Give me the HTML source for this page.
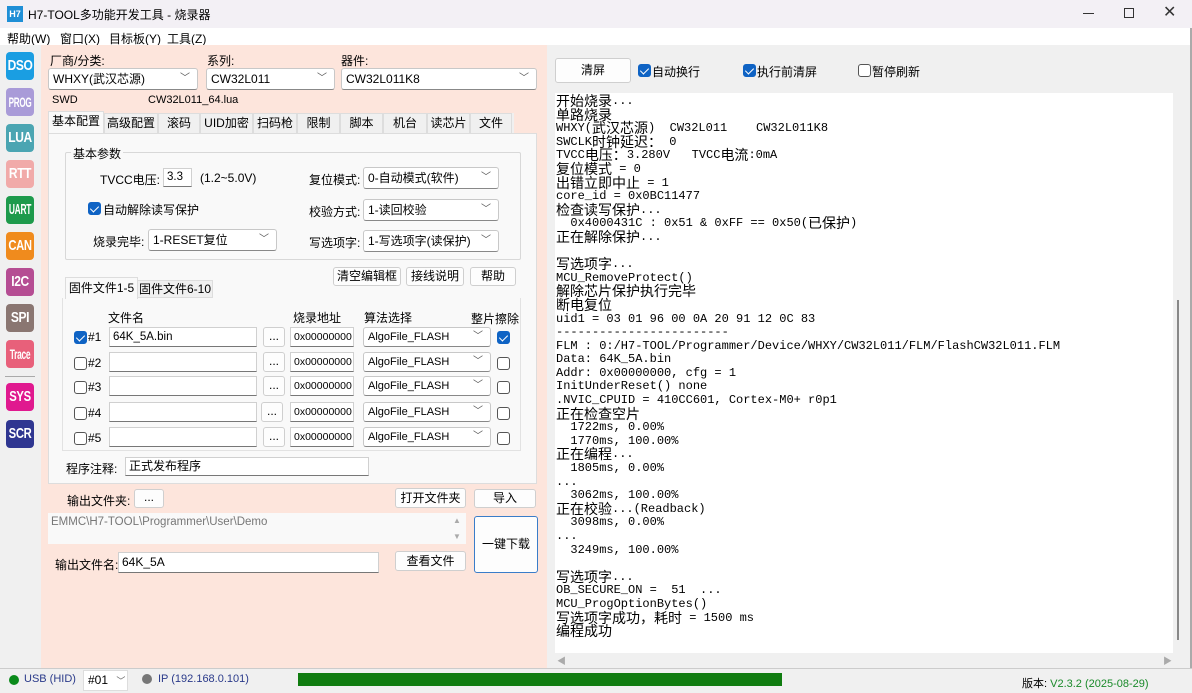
<!DOCTYPE html>
<html><head><meta charset="utf-8"><style>
*{box-sizing:border-box;margin:0;padding:0}
body{width:1192px;height:693px;overflow:hidden;position:relative;background:#f0f0f0;font-family:"Liberation Sans","Noto Sans CJK SC",sans-serif;font-size:12px;color:#000}
.a{position:absolute;white-space:nowrap}
.ic{position:absolute;left:6px;width:28px;height:28px;border-radius:4px;color:#fff;font-weight:bold;font-size:15px;line-height:28px;font-family:"Liberation Sans",sans-serif;overflow:hidden}
.ic span{position:absolute;left:50%;top:0;white-space:nowrap;--s:0.8;transform:translateX(-50%) scaleX(var(--s));letter-spacing:-0.5px}
.cb{position:absolute;background:#fff;border:1px solid #c8c8c8;border-bottom:1px solid #888;border-radius:3px;padding-left:4px;line-height:18px;font-size:12px;white-space:nowrap;overflow:hidden}
.cb .v{position:absolute;right:7px;top:0;color:#555;font-size:10px}
.in{position:absolute;background:#fff;border:1px solid #d0d0d0;border-bottom:1px solid #777;padding-left:3px;font-size:11.5px;white-space:nowrap;overflow:hidden}
.bt{position:absolute;background:#fdfdfd;border:1px solid #cfcfcf;border-radius:3px;text-align:center;font-size:12px;white-space:nowrap}
.ck{position:absolute;width:13px;height:13px;border:1px solid #555;border-radius:3px;background:#fff}
.ck.on{background:#0f63c4;border-color:#0f63c4}
.ck.on:after{content:"";position:absolute;left:3px;top:1px;width:4px;height:7px;border:solid #fff;border-width:0 1.5px 1.5px 0;transform:rotate(45deg)}
.tab{position:absolute;top:113px;height:20px;background:#f0f0f0;border:1px solid #ddd;border-bottom:none;text-align:center;line-height:19px;font-size:12px}
pre{font-family:"Liberation Mono","Noto Sans CJK SC",monospace;font-size:12px;line-height:13.6px;white-space:pre}
pre b{font-weight:normal;font-size:14px;line-height:10px;position:relative;top:2px}
</style></head><body>
<!-- title bar -->
<div class="a" style="left:0;top:0;width:1192px;height:28px;background:#f3f0f5"></div>
<div class="a" style="left:7px;top:6px;width:16px;height:16px;background:#1f8fd6;color:#fff;font-size:9px;font-weight:bold;text-align:center;line-height:16px">H7</div>
<div class="a" style="left:28px;top:6px;font-size:12px">H7-TOOL多功能开发工具 - 烧录器</div>
<div class="a" style="left:1083px;top:13px;width:11px;height:1px;background:#333"></div>
<div class="a" style="left:1124px;top:8px;width:10px;height:10px;border:1px solid #333"></div>
<div class="a" style="left:1163px;top:2px;font-size:16px;color:#333">✕</div>
<!-- menu -->
<div class="a" style="left:0;top:28px;width:1192px;height:17px;background:#fff"></div>
<div class="a" style="left:7px;top:30px;font-size:12px">帮助(W)</div>
<div class="a" style="left:60px;top:30px;font-size:12px">窗口(X)</div>
<div class="a" style="left:109px;top:30px;font-size:12px">目标板(Y)</div>
<div class="a" style="left:167px;top:30px;font-size:12px">工具(Z)</div>
<!-- sidebar -->
<div class="a" style="left:0;top:45px;width:41px;height:623px;background:#f0f0f0"></div>
<div class="ic" style="top:52px;background:#1a9ee2"><span>DSO</span></div>
<div class="ic" style="top:88px;background:#a99bd8;font-size:14px"><span style="--s:0.58">PROG</span></div>
<div class="ic" style="top:124px;background:#4ba5b2"><span>LUA</span></div>
<div class="ic" style="top:160px;background:#f1aaa9"><span>RTT</span></div>
<div class="ic" style="top:196px;background:#1d9a4c;font-size:15px"><span style="--s:0.56">UART</span></div>
<div class="ic" style="top:232px;background:#f08b1d"><span style="--s:0.75">CAN</span></div>
<div class="ic" style="top:268px;background:#b54d93"><span>I2C</span></div>
<div class="ic" style="top:304px;background:#8a7671"><span>SPI</span></div>
<div class="ic" style="top:340px;background:#e8607a;font-size:14px"><span style="--s:0.6">Trace</span></div>
<div class="a" style="left:5px;top:376px;width:30px;height:1px;background:#aaa"></div>
<div class="ic" style="top:383px;background:#e0198f"><span style="--s:0.75">SYS</span></div>
<div class="ic" style="top:420px;background:#2f3691"><span style="--s:0.75">SCR</span></div>
<!-- left panel -->
<div class="a" style="left:41px;top:45px;width:506px;height:623px;background:#fde5dc"></div>
<div class="a" style="left:50px;top:52px">厂商/分类:</div>
<div class="a" style="left:207px;top:52px">系列:</div>
<div class="a" style="left:341px;top:52px">器件:</div>
<div class="cb" style="left:48px;top:68px;width:150px;height:22px;line-height:20px">WHXY(武汉芯源)<span class="v">﹀</span></div>
<div class="cb" style="left:206px;top:68px;width:129px;height:22px;line-height:20px">CW32L011<span class="v">﹀</span></div>
<div class="cb" style="left:341px;top:68px;width:196px;height:22px;line-height:20px">CW32L011K8<span class="v">﹀</span></div>
<div class="a" style="left:52px;top:94px;font-size:11px">SWD</div>
<div class="a" style="left:148px;top:94px;font-size:11px">CW32L011_64.lua</div>
<!-- tabs -->
<div class="a" style="left:48px;top:113px;width:466px;height:20px;background:#f0f0f0"></div>
<div class="tab" style="left:48px;width:56px;background:#f9f9f9;top:111px;height:22px">基本配置</div>
<div class="tab" style="left:104px;width:54px">高级配置</div>
<div class="tab" style="left:158px;width:42px">滚码</div>
<div class="tab" style="left:200px;width:53px">UID加密</div>
<div class="tab" style="left:253px;width:44px">扫码枪</div>
<div class="tab" style="left:297px;width:43px">限制</div>
<div class="tab" style="left:340px;width:43px">脚本</div>
<div class="tab" style="left:383px;width:44px">机台</div>
<div class="tab" style="left:427px;width:43px">读芯片</div>
<div class="tab" style="left:470px;width:42px">文件</div>
<div class="a" style="left:48px;top:133px;width:489px;height:351px;background:#f9f9f9;border:1px solid #ddd"></div>
<!-- group -->
<div class="a" style="left:65px;top:152px;width:456px;height:108px;border:1px solid #d8d8d8;border-radius:2px"></div>
<div class="a" style="left:71px;top:145px;background:#f9f9f9;padding:0 2px">基本参数</div>
<div class="a" style="left:100px;top:171px">TVCC电压:</div>
<div class="in" style="left:163px;top:168px;width:29px;height:19px;line-height:17px">3.3</div>
<div class="a" style="left:200px;top:171px">(1.2~5.0V)</div>
<div class="a" style="left:309px;top:171px">复位模式:</div>
<div class="cb" style="left:363px;top:167px;width:136px;height:22px;line-height:20px">0-自动模式(软件)<span class="v">﹀</span></div>
<div class="ck on" style="left:88px;top:202px"></div>
<div class="a" style="left:103px;top:201px">自动解除读写保护</div>
<div class="a" style="left:309px;top:203px">校验方式:</div>
<div class="cb" style="left:363px;top:199px;width:136px;height:22px;line-height:20px">1-读回校验<span class="v">﹀</span></div>
<div class="a" style="left:93px;top:233px">烧录完毕:</div>
<div class="cb" style="left:148px;top:229px;width:129px;height:22px;line-height:20px">1-RESET复位<span class="v">﹀</span></div>
<div class="a" style="left:309px;top:234px">写选项字:</div>
<div class="cb" style="left:363px;top:230px;width:136px;height:22px;line-height:20px">1-写选项字(读保护)<span class="v">﹀</span></div>
<div class="bt" style="left:333px;top:267px;width:68px;height:19px;line-height:17px">清空编辑框</div>
<div class="bt" style="left:406px;top:267px;width:58px;height:19px;line-height:17px">接线说明</div>
<div class="bt" style="left:470px;top:267px;width:46px;height:19px;line-height:17px">帮助</div>
<!-- sub tabs -->
<div class="a" style="left:137px;top:280px;width:76px;height:18px;background:#f0f0f0;border:1px solid #ddd;text-align:center;line-height:17px">固件文件6-10</div>
<div class="a" style="left:65px;top:277px;width:73px;height:22px;background:#f9f9f9;border:1px solid #ddd;border-bottom:none;text-align:center;line-height:20px">固件文件1-5</div>
<div class="a" style="left:62px;top:298px;width:459px;height:153px;border:1px solid #e2e2e2;border-top:none"></div>
<div class="a" style="left:108px;top:309px">文件名</div>
<div class="a" style="left:293px;top:309px">烧录地址</div>
<div class="a" style="left:364px;top:309px">算法选择</div>
<div class="a" style="left:471px;top:310px">整片擦除</div>
<!-- rows -->
<div class="ck on" style="left:74px;top:331px"></div><div class="a" style="left:88px;top:330px">#1</div>
<div class="in" style="left:109px;top:327px;width:148px;height:20px;line-height:18px">64K_5A.bin</div>
<div class="bt" style="left:263px;top:327px;width:22px;height:20px;line-height:16px">...</div>
<div class="in" style="left:290px;top:327px;width:64px;height:20px;line-height:18px;font-size:10.5px">0x00000000</div>
<div class="cb" style="left:363px;top:327px;width:128px;height:20px;font-size:11px">AlgoFile_FLASH<span class="v">﹀</span></div>
<div class="ck on" style="left:497px;top:331px"></div>

<div class="ck" style="left:74px;top:357px"></div><div class="a" style="left:88px;top:356px">#2</div>
<div class="in" style="left:109px;top:352px;width:148px;height:20px"></div>
<div class="bt" style="left:263px;top:352px;width:22px;height:20px;line-height:16px">...</div>
<div class="in" style="left:290px;top:352px;width:64px;height:20px;line-height:18px;font-size:10.5px">0x00000000</div>
<div class="cb" style="left:363px;top:352px;width:128px;height:20px;font-size:11px">AlgoFile_FLASH<span class="v">﹀</span></div>
<div class="ck" style="left:497px;top:357px"></div>

<div class="ck" style="left:74px;top:381px"></div><div class="a" style="left:88px;top:380px">#3</div>
<div class="in" style="left:109px;top:376px;width:148px;height:20px"></div>
<div class="bt" style="left:263px;top:376px;width:22px;height:20px;line-height:16px">...</div>
<div class="in" style="left:290px;top:376px;width:64px;height:20px;line-height:18px;font-size:10.5px">0x00000000</div>
<div class="cb" style="left:363px;top:376px;width:128px;height:20px;font-size:11px">AlgoFile_FLASH<span class="v">﹀</span></div>
<div class="ck" style="left:497px;top:381px"></div>

<div class="ck" style="left:74px;top:407px"></div><div class="a" style="left:88px;top:406px">#4</div>
<div class="in" style="left:109px;top:402px;width:148px;height:20px"></div>
<div class="bt" style="left:261px;top:402px;width:22px;height:20px;line-height:16px">...</div>
<div class="in" style="left:290px;top:402px;width:64px;height:20px;line-height:18px;font-size:10.5px">0x00000000</div>
<div class="cb" style="left:363px;top:402px;width:128px;height:20px;font-size:11px">AlgoFile_FLASH<span class="v">﹀</span></div>
<div class="ck" style="left:497px;top:407px"></div>

<div class="ck" style="left:74px;top:432px"></div><div class="a" style="left:88px;top:431px">#5</div>
<div class="in" style="left:109px;top:427px;width:148px;height:20px"></div>
<div class="bt" style="left:263px;top:427px;width:22px;height:20px;line-height:16px">...</div>
<div class="in" style="left:290px;top:427px;width:64px;height:20px;line-height:18px;font-size:10.5px">0x00000000</div>
<div class="cb" style="left:363px;top:427px;width:128px;height:20px;font-size:11px">AlgoFile_FLASH<span class="v">﹀</span></div>
<div class="ck" style="left:497px;top:432px"></div>

<div class="a" style="left:66px;top:460px">程序注释:</div>
<div class="in" style="left:125px;top:457px;width:244px;height:19px;line-height:17px;font-size:12px">正式发布程序</div>
<!-- bottom -->
<div class="a" style="left:67px;top:492px">输出文件夹:</div>
<div class="bt" style="left:134px;top:489px;width:30px;height:19px;line-height:15px">...</div>
<div class="bt" style="left:395px;top:488px;width:71px;height:20px;line-height:18px">打开文件夹</div>
<div class="bt" style="left:474px;top:489px;width:62px;height:19px;line-height:17px">导入</div>
<div class="a" style="left:48px;top:513px;width:418px;height:31px;background:#f9f9f9"></div>
<div class="a" style="left:51px;top:516px;color:#777;font-size:11.5px">EMMC\H7-TOOL\Programmer\User\Demo</div>
<div class="a" style="left:453px;top:516px;color:#aaa;font-size:8px">▲</div>
<div class="a" style="left:453px;top:532px;color:#aaa;font-size:8px">▼</div>
<div class="bt" style="left:474px;top:516px;width:64px;height:57px;line-height:55px;border:1px solid #3a7dc9">一键下载</div>
<div class="a" style="left:55px;top:556px">输出文件名:</div>
<div class="in" style="left:118px;top:552px;width:261px;height:21px;line-height:19px;font-size:12px">64K_5A</div>
<div class="bt" style="left:395px;top:551px;width:71px;height:20px;line-height:18px">查看文件</div>
<!-- right panel -->
<div class="bt" style="left:555px;top:58px;width:76px;height:25px;line-height:23px">清屏</div>
<div class="ck on" style="left:638px;top:64px"></div><div class="a" style="left:652px;top:63px">自动换行</div>
<div class="ck on" style="left:743px;top:64px"></div><div class="a" style="left:757px;top:63px">执行前清屏</div>
<div class="ck" style="left:858px;top:64px"></div><div class="a" style="left:872px;top:63px">暂停刷新</div>
<div class="a" style="left:555px;top:93px;width:618px;height:560px;background:#fff;overflow:hidden">
<pre style="position:absolute;left:1px;top:2px"><b>开始烧录</b>...
<b>单路烧录</b>
WHXY(<b>武汉芯源</b>)  CW32L011    CW32L011K8
SWCLK<b>时钟延迟：</b> 0
TVCC<b>电压：</b>3.280V   TVCC<b>电流</b>:0mA
<b>复位模式</b> = 0
<b>出错立即中止</b> = 1
core_id = 0x0BC11477
<b>检查读写保护</b>...
  0x4000431C : 0x51 &amp; 0xFF == 0x50(<b>已保护</b>)
<b>正在解除保护</b>...

<b>写选项字</b>...
MCU_RemoveProtect()
<b>解除芯片保护执行完毕</b>
<b>断电复位</b>
uid1 = 03 01 96 00 0A 20 91 12 0C 83
------------------------
FLM : 0:/H7-TOOL/Programmer/Device/WHXY/CW32L011/FLM/FlashCW32L011.FLM
Data: 64K_5A.bin
Addr: 0x00000000, cfg = 1
InitUnderReset() none
.NVIC_CPUID = 410CC601, Cortex-M0+ r0p1
<b>正在检查空片</b>
  1722ms, 0.00%
  1770ms, 100.00%
<b>正在编程</b>...
  1805ms, 0.00%
...
  3062ms, 100.00%
<b>正在校验</b>...(Readback)
  3098ms, 0.00%
...
  3249ms, 100.00%

<b>写选项字</b>...
OB_SECURE_ON =  51  ...
MCU_ProgOptionBytes()
<b>写选项字成功，耗时</b> = 1500 ms
<b>编程成功</b></pre></div>
<div class="a" style="left:555px;top:653px;width:618px;height:13px;background:#f0f0f0"></div>
<div class="a" style="left:557px;top:654px;color:#aaa;font-size:9px">◀</div>
<div class="a" style="left:1163px;top:654px;color:#aaa;font-size:9px">▶</div>
<div class="a" style="left:1177px;top:300px;width:2px;height:340px;background:#888"></div>
<div class="a" style="left:1190px;top:28px;width:2px;height:640px;background:#aaa"></div>
<!-- status bar -->
<div class="a" style="left:0;top:668px;width:1192px;height:25px;background:#f0f0f0;border-top:1px solid #ccc"></div>
<div class="a" style="left:9px;top:675px;width:10px;height:10px;border-radius:50%;background:#0a8a1a"></div>
<div class="a" style="left:24px;top:673px;color:#2a3a8a;font-size:11px">USB (HID)</div>
<div class="a" style="left:83px;top:670px;width:45px;height:21px;background:#fff;border:1px solid #ddd;padding-left:4px;line-height:19px;font-size:12px">#01 <span style="color:#666;font-size:9px;margin-left:5px">﹀</span></div>
<div class="a" style="left:142px;top:674px;width:10px;height:10px;border-radius:50%;background:#777"></div>
<div class="a" style="left:158px;top:673px;color:#2a3a8a;font-size:11px">IP (192.168.0.101)</div>
<div class="a" style="left:298px;top:673px;width:484px;height:13px;background:#107c10"></div>
<div class="a" style="left:1022px;top:675px;font-size:11px">版本: <span style="color:#1a8a2a">V2.3.2 (2025-08-29)</span></div>
</body></html>
